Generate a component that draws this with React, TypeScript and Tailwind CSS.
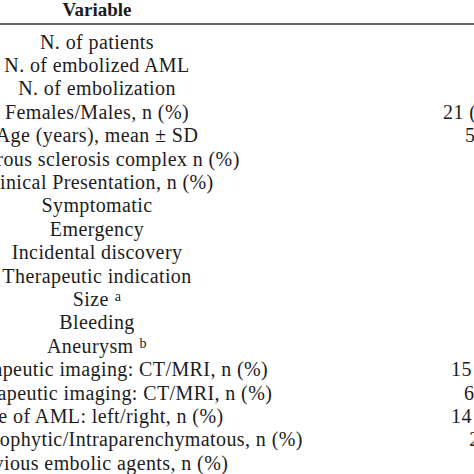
const rows: { label: string; sup?: string; value?: string }[] = [
  { label: 'N. of patients' },
  { label: 'N. of embolized AML' },
  { label: 'N. of embolization' },
  { label: 'Females/Males, n (%)', value: '21 (60.0)/14 (40.0)' },
  { label: 'Age (years), mean ± SD', value: '52.34 ± 14.61' },
  { label: 'Tuberous sclerosis complex n (%)' },
  { label: 'Clinical Presentation, n (%)' },
  { label: 'Symptomatic' },
  { label: 'Emergency' },
  { label: 'Incidental discovery' },
  { label: 'Therapeutic indication' },
  { label: 'Size', sup: 'a' },
  { label: 'Bleeding' },
  { label: 'Aneurysm', sup: 'b' },
  { label: 'Pre-therapeutic imaging: CT/MRI, n (%)', value: '15 (43)/20 (57.1)' },
  { label: 'Post-therapeutic imaging: CT/MRI, n (%)', value: '6 (17)/29 (83)' },
  { label: 'Side of AML: left/right, n (%)', value: '14 (40)/21 (60.0)' },
  { label: 'Location: Exophytic/Intraparenchymatous, n (%)', value: '2 (6)/33 (94)' },
  { label: 'Previous embolic agents, n (%)' },
]

export default function App() {
  return (
    <div
      className="w-[474px] h-[474px] overflow-hidden bg-white text-[#1c1c1c]"
      style={{ fontFamily: '"Liberation Serif", "Times New Roman", serif' }}
    >
      <div className="flex h-[25px] items-center border-b-2 border-[#6a6a6a]">
        <div className="w-[194px] shrink-0 flex justify-center whitespace-nowrap">
          <span className="text-[19px] font-bold leading-none -mt-[5px]">Variable</span>
        </div>
      </div>
      <div className="pt-[5px]">
        {rows.map((r) => (
          <div key={r.label} className="flex h-[23.4px] items-center text-[20px] tracking-[0.4px] leading-none">
            <div className="w-[194px] shrink-0 flex justify-center whitespace-nowrap">
              <span>
                {r.label}
                {r.sup && <sup className="text-[14px] ml-[6px] relative -top-[5px]">{r.sup}</sup>}
              </span>
            </div>
            <div className="w-[658px] shrink-0 flex justify-center whitespace-nowrap">
              {r.value && <span>{r.value}</span>}
            </div>
          </div>
        ))}
      </div>
    </div>
  )
}
